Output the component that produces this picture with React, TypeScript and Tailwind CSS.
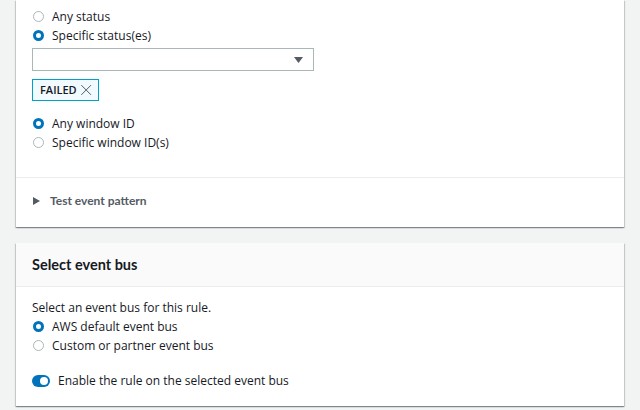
import { X } from "lucide-react";

function Radio({ checked, label }: { checked?: boolean; label: string }) {
  return (
    <label className="flex h-[19px] items-center gap-[8px]">
      <span
        className={
          checked
            ? "ml-[1px] h-[11px] w-[11px] rounded-full border-[3.5px] border-[#0073bb] bg-white"
            : "ml-[1px] h-[11px] w-[11px] rounded-full border border-[#aab7b8] bg-white"
        }
      />
      <span className="text-[12px] text-[#16191f]">{label}</span>
    </label>
  );
}

const cardShadow =
  "bg-white shadow-[0_1px_1px_0_rgba(0,28,36,0.3),1px_1px_1px_0_rgba(0,28,36,0.15),-1px_1px_1px_0_rgba(0,28,36,0.15)]";

export default function App() {
  return (
    <div
      className="min-h-[410px] bg-[#f2f3f3] px-[16px] pb-[8px] text-[#16191f]"
      style={{ fontFamily: '"Open Sans", Arial, sans-serif' }}
    >
      <div className={cardShadow}>
        <div className="px-[16px] pb-[25px] pt-[7px]">
          <Radio label="Any status" />
          <Radio checked label="Specific status(es)" />
          <div className="mt-[3px] flex h-[23px] w-[282px] items-center justify-end border border-[#aab7b8] bg-white pr-[10px]">
            <svg width="9" height="6" viewBox="0 0 9 6">
              <path d="M0 0h9L4.5 6z" fill="#545b64" />
            </svg>
          </div>
          <div className="mt-[8px] flex h-[22px] w-[67px] items-center justify-between border border-[#00a1c9] bg-[#f1faff] pl-[7px] pr-[3px]">
            <span className="text-[11px] font-semibold text-[#16191f]">FAILED</span>
            <X size={20} strokeWidth={1.3} className="text-[#545b64]" />
          </div>
          <div className="mt-[13px]">
            <Radio checked label="Any window ID" />
            <Radio label="Specific window ID(s)" />
          </div>
        </div>
        <div className="flex items-center gap-[10px] border-t border-[#eaeded] px-[17px] pb-[18px] pt-[15px]">
          <svg width="7" height="8" viewBox="0 0 7 8">
            <path d="M0 0l7 4-7 4z" fill="#545b64" />
          </svg>
          <span
            className="text-[12px] leading-[16px] font-bold text-[#545b64]"
            style={{ fontFamily: "Lato, Arial, sans-serif" }}
          >
            Test event pattern
          </span>
        </div>
      </div>

      <div className={`mt-[16px] ${cardShadow}`}>
        <div className="flex h-[44px] items-center border-b border-[#eaeded] bg-[#fafafa] px-[16px]">
          <h2
            className="text-[14.5px] font-bold text-[#16191f]"
            style={{ fontFamily: "Lato, Arial, sans-serif" }}
          >
            Select event bus
          </h2>
        </div>
        <div className="px-[16px] pb-[16px] pt-[11px]">
          <p className="h-[19px] text-[12px] leading-[19px]">Select an event bus for this rule.</p>
          <Radio checked label="AWS default event bus" />
          <Radio label="Custom or partner event bus" />
          <div className="mt-[16px] flex h-[19px] items-center gap-[8px]">
            <span className="flex h-[12px] w-[18px] items-center justify-end rounded-full bg-[#0073bb] pr-[2px]">
              <span className="h-[8px] w-[8px] rounded-full bg-white" />
            </span>
            <span className="text-[12px]">Enable the rule on the selected event bus</span>
          </div>
        </div>
      </div>
    </div>
  );
}
